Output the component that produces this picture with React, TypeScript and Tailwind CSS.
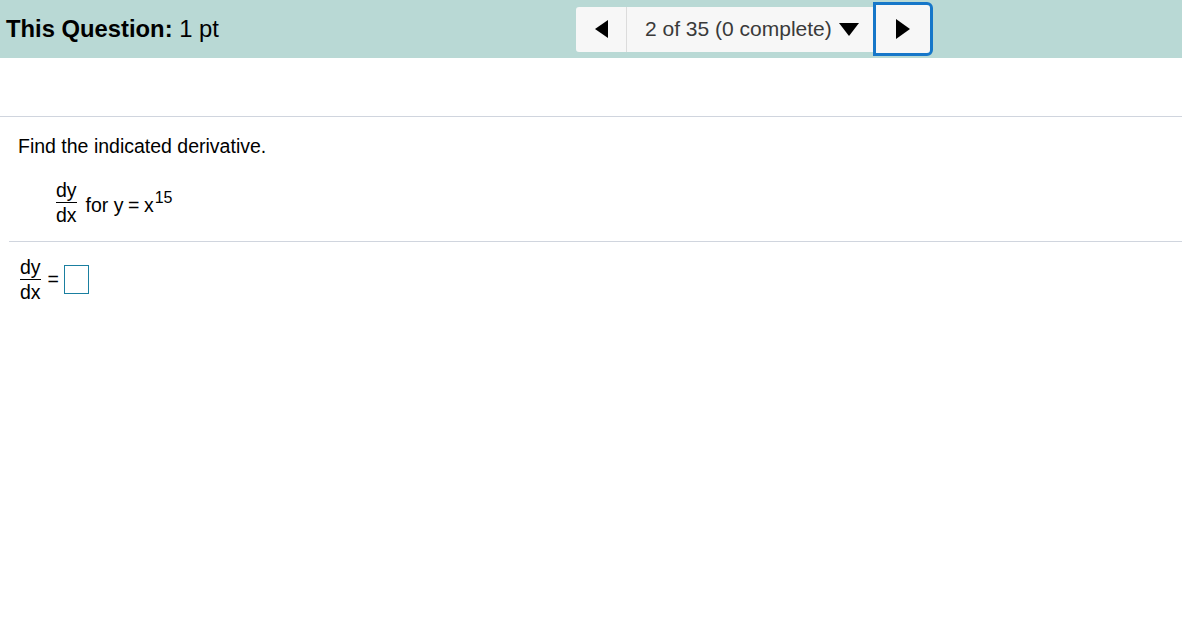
import React from "react";

function Frac() {
  return (
    <span className="inline-flex flex-col items-stretch text-[19.5px]">
      <span className="block leading-[20px] pb-[2px] text-center">dy</span>
      <span className="block h-[1.5px] bg-black" />
      <span className="block leading-[20px] pt-[1.5px] text-center">dx</span>
    </span>
  );
}

export default function App() {
  return (
    <div className="w-[1182px] h-[632px] bg-white text-black" style={{ fontFamily: '"Liberation Sans", Arial, sans-serif' }}>
      <div className="h-[58px] bg-[#b9d9d5] flex items-center">
        <div className="w-[576px] pl-[6px] text-[23.8px] leading-none">
          <span className="font-bold">This Question:</span> 1 pt
        </div>
        <div className="flex items-center h-[45px] bg-[#f7f7f7] rounded-[3px]">
          <div className="w-[51px] h-full flex items-center justify-center border-r border-[#dcdcdc]">
            <svg width="13" height="18" viewBox="0 0 13 18"><polygon points="13,0 13,18 0,9" fill="#000" /></svg>
          </div>
          <div className="w-[246px] h-full flex items-center pl-[18px] text-[21px] text-[#3a3a3a]">
            <span>2 of 35 (0 complete)</span>
            <svg className="ml-[7px]" width="20" height="13" viewBox="0 0 20 13"><polygon points="0,0 20,0 10,13" fill="#000" /></svg>
          </div>
          <div className="w-[60px] h-[54px] -my-[4px] border-[3px] border-[#1677c9] rounded-r-[6px] bg-[#f7f7f7] flex items-center justify-center">
            <svg width="14" height="20" viewBox="0 0 14 20"><polygon points="0,0 14,10 0,20" fill="#000" /></svg>
          </div>
        </div>
      </div>
      <div className="h-[58px]" />
      <div className="border-t border-[#d0d5de]" />
      <div className="pl-[18px] pt-[18.5px] text-[19.5px] leading-[20px]">Find the indicated derivative.</div>
      <div className="pl-[56px] mt-[24px] flex items-center text-[19.5px]">
        <Frac />
        <span className="ml-[9px] mt-[5px] leading-[20px]">
          for y<span className="mx-[4.5px]">=</span>x
        </span>
        <span className="self-start mt-[10.5px] ml-[1px] text-[16px] leading-none">15</span>
      </div>
      <div className="ml-[9px] mt-[16.5px] border-t border-[#d0d5de]" />
      <div className="pl-[20px] pt-[14.5px] flex items-center text-[19.5px]">
        <Frac />
        <span className="ml-[7px] leading-[20px]">=</span>
        <span className="ml-[5px] w-[25px] h-[29px] border-[1.5px] border-[#1a7fa0] bg-white" />
      </div>
    </div>
  );
}
